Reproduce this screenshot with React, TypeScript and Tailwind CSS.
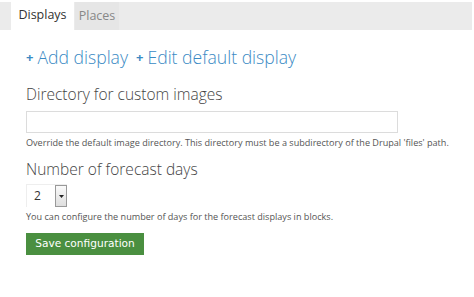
export default function App() {
  return (
    <div className="w-[474px] h-[297px] bg-white overflow-hidden font-['Open_Sans',sans-serif]">
      {/* Tabs */}
      <div className="flex h-[30px] pt-[2px] pl-0 pr-[2px]">
        <div className="flex flex-1 items-stretch bg-[#ebebeb]">
          <div className="w-[11px]" />
          <div className="-mt-[2px] flex w-[63px] items-center justify-center bg-white pt-[1px] text-[12.5px] text-[#333]">
            Displays
          </div>
          <div className="ml-[1px] flex w-[44px] items-center justify-center bg-[#e6e6e6] pt-[1px] text-[12.5px] text-[#888]">
            Places
          </div>
        </div>
      </div>

      <div className="px-[26px]">
        {/* Action links */}
        <div className="mt-[14px] flex items-center gap-[8px] text-[17.6px] font-light leading-[26px] text-[#3a8ac4]">
          <span className="flex items-center gap-[4px]">
            <span className="text-[13px] font-bold">+</span>Add display
          </span>
          <span className="flex items-center gap-[4px]">
            <span className="text-[13px] font-bold">+</span>Edit default display
          </span>
        </div>

        {/* Directory */}
        <div className="mt-[13px] text-[15.5px] font-light leading-[22px] text-[#444]">Directory for custom images</div>
        <div className="mt-[6px] h-[22px] w-[372px] border border-[#dcdcdc] bg-white" />
        <div className="mt-[3px] whitespace-nowrap text-[9.1px] leading-[14px] text-[#555]">
          Override the default image directory. This directory must be a subdirectory of the Drupal 'files' path.
        </div>

        {/* Forecast days */}
        <div className="mt-[8px] text-[15.5px] font-light leading-[22px] text-[#444]">Number of forecast days</div>
        <div className="mt-[4px] flex h-[23px] w-[41px] border-l border-t border-[#eee]">
          <div className="flex flex-1 items-center pl-[7px] text-[12px] text-[#333]">2</div>
          <div className="flex w-[12px] items-center justify-center border border-[#999] bg-gradient-to-b from-[#fafafa] to-[#dedede]">
            <svg width="5" height="3" viewBox="0 0 5 3">
              <path d="M0 0h5L2.5 3z" fill="#222" />
            </svg>
          </div>
        </div>
        <div className="mt-[3px] whitespace-nowrap text-[9.1px] leading-[14px] text-[#555]">
          You can configure the number of days for the forecast displays in blocks.
        </div>

        {/* Submit */}
        <button className="mt-[9px] flex h-[22px] w-[118px] items-center justify-center bg-[#4a8f40] font-['DejaVu_Sans',sans-serif] text-[10.6px] text-white">
          Save configuration
        </button>
      </div>
    </div>
  );
}
